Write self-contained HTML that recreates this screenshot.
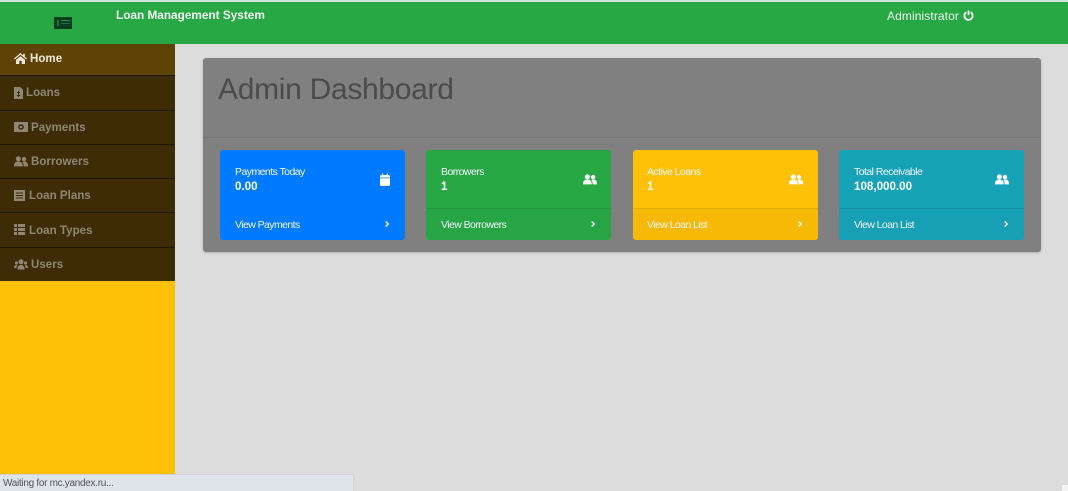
<!DOCTYPE html>
<html><head><meta charset="utf-8">
<style>
html,body{margin:0;padding:0;width:1068px;height:491px;overflow:hidden;background:#dcdcdc;font-family:"Liberation Sans",sans-serif}
div,span,svg{position:absolute}
#w{left:0;top:0;width:1068px;height:491px;filter:blur(.35px)}
.t{white-space:nowrap;line-height:1}
.nav{left:0;width:175px;background:#3d2c05;border-bottom:1px solid #1f1703;box-sizing:border-box}
.nl{font-size:11.5px;font-weight:bold;color:#8f8676;letter-spacing:.05px}
.card{top:150px;width:185px;height:90px;border-radius:3px}
.foot{left:0;top:58px;width:185px;height:32px;border-radius:0 0 3px 3px;background:rgba(0,0,0,.015);border-top:1px solid rgba(0,0,0,.08);box-sizing:border-box}
.c1{left:15px;top:17px;font-size:10.5px;color:#f2f6fa;letter-spacing:-.55px}
.c2{left:15px;top:31px;font-size:11.6px;font-weight:bold;color:#fff}
.c3{left:15px;top:70px;font-size:10.5px;color:#f2f6fa;letter-spacing:-.58px}
.ch{right:15px;top:70px}
</style></head>
<body>
<svg width="0" height="0" style="left:0;top:0">
<defs>
<symbol id="users" viewBox="0 0 16 12"><circle cx="5" cy="3" r="2.900" fill="currentColor"/><circle cx="11.500" cy="3.200" r="2.500" fill="currentColor"/><path d="M0 11c0-3.400 2-5 5-5s5 1.600 5 5v.5H0z" fill="currentColor"/><path d="M11 11.500V10.500c0-1.700-.6-3-1.600-3.900.7-.4 1.400-.6 2.300-.6 2.700 0 4.300 1.500 4.300 4.500v1z" fill="currentColor"/></symbol>
<symbol id="chev" viewBox="0 0 6 8"><path d="M1.700 1.500l2.500 2.500-2.500 2.500" fill="none" stroke="currentColor" stroke-width="1.400"/></symbol>
</defs>
</svg>
<div id="w">

<!-- Top bar -->
<div style="left:0;top:0;width:1068px;height:2px;background:#d5e3d6"></div>
<div style="left:0;top:2px;width:1068px;height:42px;background:#28a745"></div>
<div style="left:54px;top:17px;width:18px;height:12px;background:#063d1c"></div>
<div style="left:57px;top:20px;width:2px;height:6px;background:#1f6d3c"></div>
<div style="left:61px;top:20px;width:9px;height:1px;background:#2f8a50"></div>
<div style="left:61px;top:23px;width:9px;height:1px;background:#1f6d3c"></div>
<div class="t" style="left:116px;top:10px;font-size:11.800px;font-weight:bold;color:#f3f8f2">Loan Management System</div>
<div class="t" style="left:887px;top:10px;font-size:12px;color:#eef7ee;letter-spacing:.1px">Administrator</div>
<svg style="left:963px;top:10px" width="11" height="11" viewBox="0 0 12 12"><path d="M3.600 2.500a4.500 4.500 0 1 0 4.800 0" fill="none" stroke="#fff" stroke-width="1.900"/><path d="M6 .5v5" stroke="#fff" stroke-width="1.900"/></svg>

<!-- Sidebar -->
<div style="left:0;top:44px;width:175px;height:430px;background:#ffc107"></div>
<div class="nav" style="top:44px;height:32px;background:#5f4306"></div>
<div class="nav" style="top:76px;height:35px"></div>
<div class="nav" style="top:111px;height:34px"></div>
<div class="nav" style="top:145px;height:34px"></div>
<div class="nav" style="top:179px;height:34px"></div>
<div class="nav" style="top:213px;height:35px"></div>
<div class="nav" style="top:248px;height:33px;border-bottom:0"></div>

<svg style="left:14px;top:53px" width="13" height="11" viewBox="0 0 13 11"><path d="M6.500 0L0 5.500l.8.900L6.500 1.800l5.700 4.600.8-.9L10.800 3.700V.8H9.200v1.600zM2 6.800V11h3.300V7.800h2.400V11H11V6.800L6.500 3.200z" fill="#f1eadb"/></svg>
<div class="t nl" style="left:30px;top:54px;color:#f1eadb">Home</div>

<svg style="left:14px;top:87px" width="9" height="12" viewBox="0 0 9 12"><path d="M0 0h6l3 2.500V12H0z" fill="#8f8676"/><path d="M4.500 4v6M3 5.500h3M3 8.500h3" stroke="#3d2c05" stroke-width="1"/></svg>
<div class="t nl" style="left:26px;top:88px">Loans</div>

<svg style="left:14px;top:122px" width="14" height="10" viewBox="0 0 14 10"><path fill-rule="evenodd" d="M0 0h14v10H0zM7 2.200a2.800 2.800 0 1 0 0 5.600 2.800 2.800 0 0 0 0-5.600z" fill="#8f8676"/><circle cx="7" cy="5" r="1.300" fill="#8f8676"/></svg>
<div class="t nl" style="left:31px;top:123px">Payments</div>

<svg style="left:14px;top:156px;color:#8f8676" width="14" height="11"><use href="#users"/></svg>
<div class="t nl" style="left:31px;top:157px">Borrowers</div>

<svg style="left:14px;top:190px" width="11" height="11" viewBox="0 0 11 11"><path fill-rule="evenodd" d="M0 0h11v11H0zM2 2.500v1h7v-1zM2 5v1h7V5zM2 7.500v1h7v-1z" fill="#8f8676"/></svg>
<div class="t nl" style="left:29px;top:191px">Loan Plans</div>

<svg style="left:14px;top:224px" width="11" height="11" viewBox="0 0 11 11"><path d="M0 0h3v3H0zM4 0h7v3H4zM0 4h3v3H0zM4 4h7v3H4zM0 8h3v3H0zM4 8h7v3H4z" fill="#8f8676"/></svg>
<div class="t nl" style="left:29px;top:226px">Loan Types</div>

<svg style="left:14px;top:259px;color:#8f8676" width="14" height="11" viewBox="0 0 14 11"><circle cx="7" cy="2.800" r="2.500" fill="currentColor"/><circle cx="2.500" cy="4" r="1.600" fill="currentColor"/><circle cx="11.500" cy="4" r="1.600" fill="currentColor"/><path d="M3.500 10.500c0-3.500 1.200-4.500 3.500-4.500s3.500 1 3.500 4.500zM0 9c0-2 .8-3 2.500-3l.7.200C2.700 7 2.500 8 2.500 9zM14 9c0-2-.8-3-2.500-3l-.7.200c.5.800.7 1.800.7 2.800z" fill="currentColor"/></svg>
<div class="t nl" style="left:31px;top:260px">Users</div>

<!-- Main panel -->
<div style="left:203px;top:58px;width:838px;height:194px;background:#808080;border-radius:3px;box-shadow:0 1px 2px rgba(0,0,0,.2)"></div>
<div style="left:203px;top:137px;width:838px;height:1px;background:#777"></div>
<div class="t" style="left:218px;top:75px;font-size:30px;color:#4a4b4c;letter-spacing:-.3px">Admin Dashboard</div>

<!-- Cards -->
<div class="card" style="left:220px;background:#007bff">
  <div class="t c1">Payments Today</div><div class="t c2">0.00</div>
  <svg style="left:160px;top:23px" width="10" height="13" viewBox="0 0 10 13"><path d="M0 3.500a1.500 1.500 0 0 1 1.500-1.500h7A1.500 1.500 0 0 1 10 3.500v1H0zM0 5.300h10V11.500A1.500 1.500 0 0 1 8.500 13h-7A1.500 1.500 0 0 1 0 11.500zM2 .5h1.200V2H2zM6.800.5H8V2H6.800z" fill="#fff"/></svg>
  <div class="t c3">View Payments</div>
  <svg class="ch" style="color:#fff" width="6" height="8"><use href="#chev"/></svg>
</div>
<div class="card" style="left:426px;background:#28a745">
  <div class="t c1">Borrowers</div><div class="t c2">1</div>
  <svg style="left:157px;top:24px;color:#fff" width="14" height="11"><use href="#users"/></svg>
  <div class="foot"></div>
  <div class="t c3">View Borrowers</div>
  <svg class="ch" style="color:#fff" width="6" height="8"><use href="#chev"/></svg>
</div>
<div class="card" style="left:633px;background:#ffc107">
  <div class="t c1" style="left:14px">Active Loans</div><div class="t c2" style="left:14px">1</div>
  <svg style="left:156px;top:24px;color:#fff" width="14" height="11"><use href="#users"/></svg>
  <div class="foot" style="background:rgba(0,0,0,.04)"></div>
  <div class="t c3" style="left:14px">View Loan List</div>
  <svg class="ch" style="color:#fff" width="6" height="8"><use href="#chev"/></svg>
</div>
<div class="card" style="left:839px;background:#17a2b8">
  <div class="t c1">Total Receivable</div><div class="t c2">108,000.00</div>
  <svg style="left:156px;top:24px;color:#fff" width="14" height="11"><use href="#users"/></svg>
  <div class="foot"></div>
  <div class="t c3">View Loan List</div>
  <svg class="ch" style="color:#fff" width="6" height="8"><use href="#chev"/></svg>
</div>

<!-- Status bubble -->
<div style="left:0;top:474px;width:354px;height:17px;background:#dfe3ea;border-top:1px solid #cfd2d6;border-right:1px solid #cfd2d6;box-sizing:border-box;border-radius:0 2px 0 0"></div>
<div class="t" style="left:3px;top:479px;font-size:10px;color:#555;letter-spacing:-.3px">Waiting for mc.yandex.ru...</div>
<div style="left:1062px;top:485px;width:6px;height:6px;background:#f4f4f4"></div>
</div>
</body></html>
